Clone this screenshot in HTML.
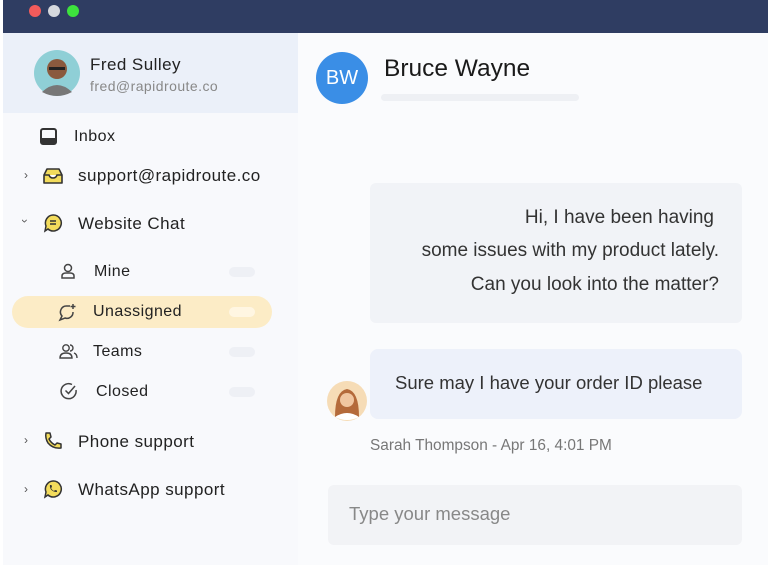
<!DOCTYPE html>
<html><head><meta charset="utf-8"><style>
*{margin:0;padding:0;box-sizing:border-box}
body{width:768px;height:577px;background:#fff;font-family:"Liberation Sans",sans-serif;position:relative;overflow:hidden}
.top{position:absolute;left:3px;top:0;width:765px;height:33px;background:#2f3d62}
.dot{position:absolute;top:5px;width:12px;height:12px;border-radius:50%}
.side{position:absolute;left:3px;top:33px;width:295px;height:532px;background:#f8f9fc}
.prof{position:absolute;left:3px;top:33px;width:295px;height:80px;background:#ebf0f9}
.main{position:absolute;left:298px;top:33px;width:470px;height:532px;background:#fafbfd}
.t{position:absolute;white-space:nowrap;color:#222}
.s{letter-spacing:0.45px}
.ic{position:absolute}
.chev{position:absolute;color:#555;font-size:12px}
.pill{position:absolute;left:229px;width:26px;height:10px;border-radius:5px;background:#eef0f5}
</style></head><body>
<div class="top">
<div class="dot" style="left:26px;background:#f25b5b"></div>
<div class="dot" style="left:45px;background:#d5d8dd"></div>
<div class="dot" style="left:64px;background:#3de33d"></div>
</div>
<div class="side"></div>
<div class="prof"></div>
<svg class="ic" style="left:34px;top:50px" width="46" height="46" viewBox="0 0 46 46"><circle cx="23" cy="23" r="23" fill="#8fcfd6"/><circle cx="23" cy="19" r="10" fill="#8a5a3e"/><path d="M8 42 Q23 28 38 42 Q23 50 8 42Z" fill="#777"/><rect x="15" y="17" width="16" height="3" fill="#222"/></svg>
<div class="t s" style="left:90px;top:55px;font-size:17px;color:#222">Fred Sulley</div>
<div class="t s" style="left:90px;top:78px;font-size:14px;color:#888">fred@rapidroute.co</div>

<svg class="ic" style="left:40px;top:128px" width="17" height="17" viewBox="0 0 17 17"><rect x="1" y="1" width="15" height="15" rx="2" fill="none" stroke="#333" stroke-width="2"/><rect x="1" y="10" width="15" height="6" fill="#333"/></svg>
<div class="t s" style="left:74px;top:128px;font-size:16px">Inbox</div>

<div class="chev" style="left:24px;top:168px">›</div>
<svg class="ic" style="left:42px;top:167px" width="22" height="18" viewBox="0 0 22 18"><path d="M2 8 L5 2 H17 L20 8 V16 H2Z" fill="#f3dc5c" stroke="#333" stroke-width="1.6" stroke-linejoin="round"/><path d="M2 8 H7 Q8 11 11 11 Q14 11 15 8 H20" fill="#fff" stroke="#333" stroke-width="1.6"/></svg>
<div class="t s" style="left:78px;top:166px;font-size:17px">support@rapidroute.co</div>

<div class="chev" style="left:23px;top:214px;transform:rotate(90deg)">›</div>
<svg class="ic" style="left:43px;top:213px" width="20" height="20" viewBox="0 0 20 20"><path d="M10 2 A8 8 0 1 1 5 16 L2 18 L3 13 A8 8 0 0 1 10 2Z" fill="#f3dc5c" stroke="#333" stroke-width="1.5"/><path d="M7 8H13M7 11H13" stroke="#333" stroke-width="1.5"/></svg>
<div class="t s" style="left:78px;top:214px;font-size:17px">Website Chat</div>

<svg class="ic" style="left:60px;top:263px" width="16" height="16" viewBox="0 0 16 16"><circle cx="8" cy="5" r="3.5" fill="none" stroke="#444" stroke-width="1.5"/><path d="M2 15 V13 Q2 10 6 10 H10 Q14 10 14 13 V15Z" fill="none" stroke="#444" stroke-width="1.5"/></svg>
<div class="t s" style="left:94px;top:263px;font-size:16px">Mine</div>
<div class="pill" style="top:267px"></div>

<div style="position:absolute;left:12px;top:296px;width:260px;height:32px;border-radius:16px;background:#fcecc6"></div>
<svg class="ic" style="left:58px;top:302px" width="20" height="20" viewBox="0 0 20 20"><path d="M12 4 H9 A6 6 0 0 0 4 14 L2 18 L7 16 A6 6 0 0 0 15 10" fill="none" stroke="#444" stroke-width="1.5"/><path d="M15 2V7M12.5 4.5H17.5" stroke="#444" stroke-width="1.5"/></svg>
<div class="t s" style="left:93px;top:303px;font-size:16px">Unassigned</div>
<div class="pill" style="top:307px;background:#fff6e2"></div>

<svg class="ic" style="left:59px;top:343px" width="19" height="16" viewBox="0 0 19 16"><circle cx="7" cy="5" r="3.2" fill="none" stroke="#444" stroke-width="1.4"/><path d="M1 15 Q1 10 7 10 Q13 10 13 15Z" fill="none" stroke="#444" stroke-width="1.4"/><path d="M11 2 A3 3 0 0 1 11 8 M15 10 Q18 11 18 15" fill="none" stroke="#444" stroke-width="1.4"/></svg>
<div class="t s" style="left:93px;top:343px;font-size:16px">Teams</div>
<div class="pill" style="top:347px"></div>

<svg class="ic" style="left:60px;top:382px" width="18" height="18" viewBox="0 0 18 18"><path d="M16 8 A7.5 7.5 0 1 1 12 2.5" fill="none" stroke="#444" stroke-width="1.5"/><path d="M5.5 8.5 L8.5 11.5 L15 4" fill="none" stroke="#444" stroke-width="1.5"/></svg>
<div class="t s" style="left:96px;top:383px;font-size:16px">Closed</div>
<div class="pill" style="top:387px"></div>

<div class="chev" style="left:24px;top:433px">›</div>
<svg class="ic" style="left:43px;top:431px" width="20" height="20" viewBox="0 0 20 20"><path d="M3 2 L7 2 L8 6 L6 8 Q8 12 12 14 L14 12 L18 13 L18 17 Q10 18 5 12 Q2 7 3 2Z" fill="#f3dc5c" stroke="#333" stroke-width="1.5" stroke-linejoin="round"/></svg>
<div class="t s" style="left:78px;top:432px;font-size:17px">Phone support</div>

<div class="chev" style="left:24px;top:482px">›</div>
<svg class="ic" style="left:43px;top:479px" width="20" height="20" viewBox="0 0 20 20"><path d="M10 2 A8 8 0 1 1 5 16 L2 18 L3 13 A8 8 0 0 1 10 2Z" fill="#f3dc5c" stroke="#333" stroke-width="1.5"/><path d="M7 6 L8.5 6 L9 8 L8 9 Q9 11 11 12 L12 11 L14 11.5 L14 13 Q10 13 8 10.5 Q6.5 8 7 6Z" fill="#333"/></svg>
<div class="t s" style="left:78px;top:480px;font-size:17px">WhatsApp support</div>

<div class="main"></div>
<div style="position:absolute;left:316px;top:52px;width:52px;height:52px;border-radius:50%;background:#3a8ee6;color:#fff;font-size:20px;text-align:center;line-height:52px">BW</div>
<div class="t" style="left:384px;top:55px;font-size:24.5px;color:#1a1a1a">Bruce Wayne</div>
<div style="position:absolute;left:381px;top:94px;width:198px;height:7px;border-radius:4px;background:#eef0f4"></div>

<div style="position:absolute;left:370px;top:183px;width:372px;height:140px;background:#f1f3f7;border-radius:6px"></div>
<div class="t" style="right:54px;top:207px;font-size:19px;color:#333">Hi, I have been having</div>
<div class="t" style="right:49px;top:240px;font-size:19px;color:#333">some issues with my product lately.</div>
<div class="t" style="right:49px;top:274px;font-size:19px;color:#333">Can you look into the matter?</div>

<div style="position:absolute;left:370px;top:349px;width:372px;height:70px;background:#edf1fa;border-radius:8px"></div>
<div class="t" style="left:395px;top:372px;font-size:18.5px;color:#333">Sure may I have your order ID please</div>
<svg class="ic" style="left:327px;top:381px" width="40" height="40" viewBox="0 0 40 40"><circle cx="20" cy="20" r="20" fill="#f6dcb6"/><path d="M8 36 Q8 10 20 8 Q32 10 32 36Z" fill="#b46a3a"/><circle cx="20" cy="19" r="7" fill="#f0c6a0"/><path d="M8 36 Q20 28 32 36 Q20 42 8 36Z" fill="#fff"/></svg>
<div class="t" style="left:370px;top:437px;font-size:15.4px;color:#777">Sarah Thompson - Apr 16, 4:01 PM</div>

<div style="position:absolute;left:328px;top:485px;width:414px;height:60px;background:#f2f3f6;border-radius:6px"></div>
<div class="t" style="left:349px;top:503px;font-size:18.5px;color:#888">Type your message</div>
</body></html>
